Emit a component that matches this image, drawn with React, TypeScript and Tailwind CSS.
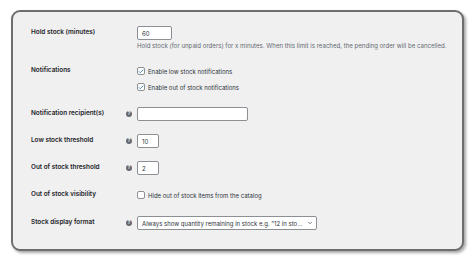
import { Check, ChevronDown } from 'lucide-react';

const font = { fontFamily: 'Inter, "Noto Sans", sans-serif' };

const Help = () => (
    <span className="flex h-[6px] w-[6px] items-center justify-center rounded-full bg-[#646970] text-[4.5px] font-bold leading-none text-white">
        ?
    </span>
);

const Box = ({ checked }: { checked?: boolean }) => (
    <span className="flex h-[8px] w-[8px] items-center justify-center rounded-[2px] border border-[#8c8f94] bg-white">
        {checked && <Check className="h-[7px] w-[7px] text-[#2271b1]" strokeWidth={3} />}
    </span>
);

const Row = ({
    label,
    help,
    className = '',
    children,
}: {
    label: string;
    help?: boolean;
    className?: string;
    children: React.ReactNode;
}) => (
    <div className={`flex items-start ${className}`}>
        <div className="flex h-[14px] w-[95px] shrink-0 items-center text-[6.4px] font-semibold text-[#1d2327]">
            {label}
        </div>
        <div className="flex h-[14px] w-[11px] shrink-0 items-center">{help && <Help />}</div>
        <div className="flex flex-col">{children}</div>
    </div>
);

const Input = ({ value, w }: { value?: string; w: string }) => (
    <div
        className={`flex h-[14px] ${w} items-center rounded-[2px] border border-[#8c8f94] bg-white px-[4px] text-[6px] text-[#2c3338]`}
    >
        {value}
    </div>
);

const CheckLine = ({ checked, text }: { checked?: boolean; text: string }) => (
    <div className="flex h-[14px] items-center gap-[3px] text-[6px] text-[#2c3338]">
        <Box checked={checked} />
        {text}
    </div>
);

export default function App() {
    return (
        <div className="h-[259px] w-[474px] bg-white pl-[11px] pt-[10px]" style={font}>
            <div className="h-[241px] w-[453px] rounded-[9px] border-2 border-[#6e6e6e] bg-[#f0f0f1] pl-[18px] pt-[14px] shadow-[2px_2px_3px_rgba(0,0,0,0.35)]">
                <Row label="Hold stock (minutes)">
                    <Input value="60" w="w-[35px]" />
                    <p className="mt-[2px] whitespace-nowrap text-[6.1px] leading-[8px] text-[#646970]">
                        Hold stock (for unpaid orders) for x minutes. When this limit is reached, the pending order
                        will be cancelled.
                    </p>
                </Row>
                <Row label="Notifications" className="mt-[14px]">
                    <CheckLine checked text="Enable low stock notifications" />
                    <div className="mt-[2px]">
                        <CheckLine checked text="Enable out of stock notifications" />
                    </div>
                </Row>
                <Row label="Notification recipient(s)" help className="mt-[13px]">
                    <Input w="w-[111px]" />
                </Row>
                <Row label="Low stock threshold" help className="mt-[13px]">
                    <Input value="10" w="w-[22px]" />
                </Row>
                <Row label="Out of stock threshold" help className="mt-[13px]">
                    <Input value="2" w="w-[22px]" />
                </Row>
                <Row label="Out of stock visibility" className="mt-[13px]">
                    <CheckLine text="Hide out of stock items from the catalog" />
                </Row>
                <Row label="Stock display format" help className="mt-[14px]">
                    <div className="flex h-[14px] w-[180px] items-center justify-between rounded-[2px] border border-[#8c8f94] bg-white pl-[4px] pr-[3px] text-[6px] text-[#2c3338]">
                        <span>Always show quantity remaining in stock e.g. "12 in sto...</span>
                        <ChevronDown className="h-[6px] w-[6px]" strokeWidth={2.5} />
                    </div>
                </Row>
            </div>
        </div>
    );
}
